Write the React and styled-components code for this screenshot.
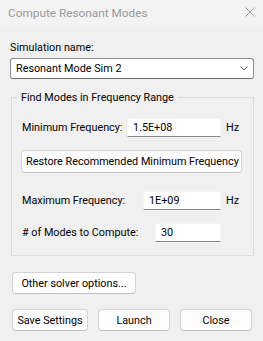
import React from "react";
import styled, { createGlobalStyle } from "styled-components";

const Global = createGlobalStyle`
  html, body { margin: 0; padding: 0; background: #f0f0f0; }
  * { box-sizing: border-box; }
`;

const Window = styled.div`
  width: 263px;
  height: 341px;
  background: #f0f0f0;
  display: flex;
  flex-direction: column;
  overflow: hidden;
  font-family: Roboto, "Noto Sans", sans-serif;
  font-size: 10.8px;
  color: #000;
`;

const TitleBar = styled.div`
  height: 27px;
  flex: none;
  background: #f3f3f3;
  display: flex;
  align-items: center;
  justify-content: space-between;
  padding: 0 8px 0 8px;
`;

const Title = styled.span`
  color: #999;
  font-size: 11.8px;
  line-height: 15px;
  padding-bottom: 1px;
`;

const CloseIcon = styled.svg`
  width: 10px;
  height: 10px;
  margin-bottom: 3px;
  display: block;
`;

const Body = styled.div`
  padding: 13px 9px 0 10px;
  display: flex;
  flex-direction: column;
`;

const Label = styled.label`
  line-height: 15px;
  white-space: nowrap;
`;

const Select = styled.div`
  margin-top: 3px;
  height: 21px;
  background: #fff;
  border: 1px solid #8d8d8d;
  border-bottom-color: #6f6f6f;
  border-radius: 3px;
  display: flex;
  align-items: center;
  justify-content: space-between;
  padding: 0 5px 0 5px;
  line-height: 15px;
`;

const Chevron = styled.svg`
  width: 8px;
  height: 5px;
  display: block;
`;

const Group = styled.fieldset`
  margin: 11px 0 0 1px;
  padding: 0 11px 13px 9px;
  border: 1px solid #dcdcdc;
  border-radius: 0;
  display: flex;
  flex-direction: column;
  min-width: 0;
`;

const Legend = styled.legend`
  padding: 0 4px;
  margin-left: -4px;
  line-height: 15px;
`;

const Row = styled.div`
  display: grid;
  grid-template-columns: 1fr ${(p) => p.$w}px 21px;
  align-items: center;
  margin-top: ${(p) => p.$mt}px;
`;

const RowLabel = styled.span`
  line-height: 15px;
  padding-left: 1px;
  white-space: nowrap;
`;

const Input = styled.div`
  height: 19px;
  background: #fff;
  border: 1px solid #f4f4f4;
  border-bottom: 1px solid #8a8a8a;
  border-radius: 2px 2px 0 0;
  padding: 0 5px;
  display: flex;
  align-items: center;
  line-height: 15px;
`;

const Unit = styled.span`
  padding-left: 5px;
  line-height: 15px;
`;

const Button = styled.button`
  font: inherit;
  color: #000;
  height: ${(p) => p.$h || 22}px;
  width: ${(p) => (p.$w ? `${p.$w}px` : "auto")};
  background: #fdfdfd;
  border: 1px solid #d3d3d3;
  border-bottom-color: #c2c2c2;
  border-radius: 4px;
  padding: 0 4px;
  line-height: 15px;
  white-space: nowrap;
  margin-top: ${(p) => p.$mt || 0}px;
  margin-left: ${(p) => p.$ml || 0}px;
  align-self: ${(p) => p.$align || "stretch"};
`;

const ButtonRow = styled.div`
  display: flex;
  gap: 10px;
  margin-top: 15px;
  padding-left: 2px;
`;

export default function App() {
  return (
    <Window>
      <Global />
      <TitleBar>
        <Title>Compute Resonant Modes</Title>
        <CloseIcon viewBox="0 0 10 10">
          <path d="M0.5 0.5 L9.5 9.5 M9.5 0.5 L0.5 9.5" stroke="#a0a0a0" strokeWidth="1" fill="none" />
        </CloseIcon>
      </TitleBar>
      <Body>
        <Label>Simulation name:</Label>
        <Select>
          <span>Resonant Mode Sim 2</span>
          <Chevron viewBox="0 0 8 5">
            <path d="M0.5 0.5 L4 4 L7.5 0.5" stroke="#555" strokeWidth="1" fill="none" />
          </Chevron>
        </Select>
        <Group>
          <Legend>Find Modes in Frequency Range</Legend>
          <Row $w={94} $mt={13}>
            <RowLabel>Minimum Frequency:</RowLabel>
            <Input>1.5E+08</Input>
            <Unit>Hz</Unit>
          </Row>
          <Button $mt={13} $h={23}>Restore Recommended Minimum Frequency</Button>
          <Row $w={78} $mt={18}>
            <RowLabel>Maximum Frequency:</RowLabel>
            <Input>1E+09</Input>
            <Unit>Hz</Unit>
          </Row>
          <Row $w={66} $mt={13}>
            <RowLabel># of Modes to Compute:</RowLabel>
            <Input>30</Input>
            <Unit />
          </Row>
        </Group>
        <Button $mt={16} $ml={2} $align="flex-start" $w={124}>Other solver options...</Button>
        <ButtonRow>
          <Button $w={76}>Save Settings</Button>
          <Button $w={72}>Launch</Button>
          <Button $w={72}>Close</Button>
        </ButtonRow>
      </Body>
    </Window>
  );
}
